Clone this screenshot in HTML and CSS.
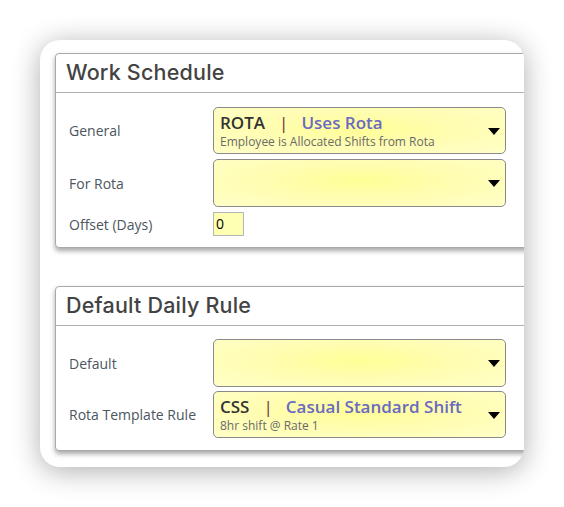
FILE: index.html
```html
<!DOCTYPE html>
<html>
<head>
<meta charset="utf-8">
<link rel="stylesheet" href="styles.css">
</head>
<body>
<div class="frame">
  <section class="panel panel-first">
    <header class="panel-head">Work Schedule</header>
    <div class="panel-body">
      <div class="row">
        <span class="label">General</span>
        <div class="select">
          <div class="select-text">
            <div class="main"><span class="code">ROTA</span><span class="sep">|</span><span class="name">Uses Rota</span></div>
            <div class="sub">Employee is Allocated Shifts from Rota</div>
          </div>
          <span class="arrow"></span>
        </div>
      </div>
      <div class="row">
        <span class="label">For Rota</span>
        <div class="select select-empty">
          <div class="select-text"></div>
          <span class="arrow"></span>
        </div>
      </div>
      <div class="row row-small">
        <span class="label">Offset (Days)</span>
        <div class="num">0</div>
      </div>
    </div>
  </section>
  <section class="panel panel-second">
    <header class="panel-head">Default Daily Rule</header>
    <div class="panel-body">
      <div class="row">
        <span class="label">Default</span>
        <div class="select select-empty">
          <div class="select-text"></div>
          <span class="arrow"></span>
        </div>
      </div>
      <div class="row row-tight">
        <span class="label">Rota Template Rule</span>
        <div class="select">
          <div class="select-text">
            <div class="main"><span class="code">CSS</span><span class="sep">|</span><span class="name">Casual Standard Shift</span></div>
            <div class="sub">8hr shift @ Rate 1</div>
          </div>
          <span class="arrow"></span>
        </div>
      </div>
    </div>
  </section>
</div>
</body>
</html>
```

FILE: styles.css
```css
* { box-sizing: border-box; }
html, body {
  margin: 0;
  padding: 0;
  background: #ffffff;
}
body {
  width: 564px;
  height: 507px;
  overflow: hidden;
  padding: 40px 0 0 40px;
  font-family: "Open Sans", "Liberation Sans", sans-serif;
}
.frame {
  width: 484px;
  height: 427px;
  background: #ffffff;
  border-radius: 20px;
  overflow: hidden;
  box-shadow: 0 4px 28px rgba(0, 0, 0, 0.32);
  padding: 13px 0 0 15px;
}
.panel {
  width: 540px;
  background: #ffffff;
  border: 1px solid #a9a9a9;
  border-radius: 4px;
  box-shadow: 0 3px 5px rgba(0, 0, 0, 0.35);
}
.panel-second {
  margin-top: 38px;
}
.panel-head {
  height: 39px;
  border-bottom: 1px solid #b0b0b0;
  padding: 5px 0 0 10px;
  font-family: "Inter", "DejaVu Sans", sans-serif;
  font-weight: 500;
  font-size: 21.5px;
  letter-spacing: 0.2px;
  color: #434343;
}
.panel-body {
  padding: 14px 0 11px 13px;
  display: flex;
  flex-direction: column;
  gap: 5px;
}
.panel-second .panel-body {
  padding-top: 13px;
  padding-bottom: 12px;
  gap: 4px;
}
.row {
  display: flex;
  align-items: center;
}
.label {
  width: 144px;
  font-size: 14px;
  color: #4d5560;
}
.select {
  width: 293px;
  height: 47px;
  border: 1px solid #8a8a8a;
  border-radius: 5px;
  background: radial-gradient(ellipse at 50% 45%, #ffff96 0%, #fffdb0 45%, #ffffc8 100%);
  display: flex;
  align-items: center;
  padding: 0 5px 0 6px;
}
.select-empty { height: 48px; }
.select-text {
  flex: 1;
  display: flex;
  flex-direction: column;
  margin-top: 0;
}
.main {
  font-size: 17px;
  font-weight: 600;
  line-height: 23px;
  white-space: nowrap;
}
.code { color: #333333; }
.sep {
  color: #6b2d40;
  font-weight: 400;
  margin: 0 13px 0 14px;
}
.name { color: #6a69c3; }
.sub {
  font-size: 12px;
  line-height: 16px;
  color: #6a6a6a;
  white-space: nowrap;
}
.arrow {
  width: 0;
  height: 0;
  border-left: 6px solid transparent;
  border-right: 6px solid transparent;
  border-top: 7px solid #000000;
  margin-top: 1px;
}
.num {
  width: 31px;
  height: 24px;
  border: 1px solid #b5b5b5;
  background: #ffffb4;
  font-size: 14px;
  line-height: 22px;
  padding-left: 2px;
  color: #000000;
}
```
